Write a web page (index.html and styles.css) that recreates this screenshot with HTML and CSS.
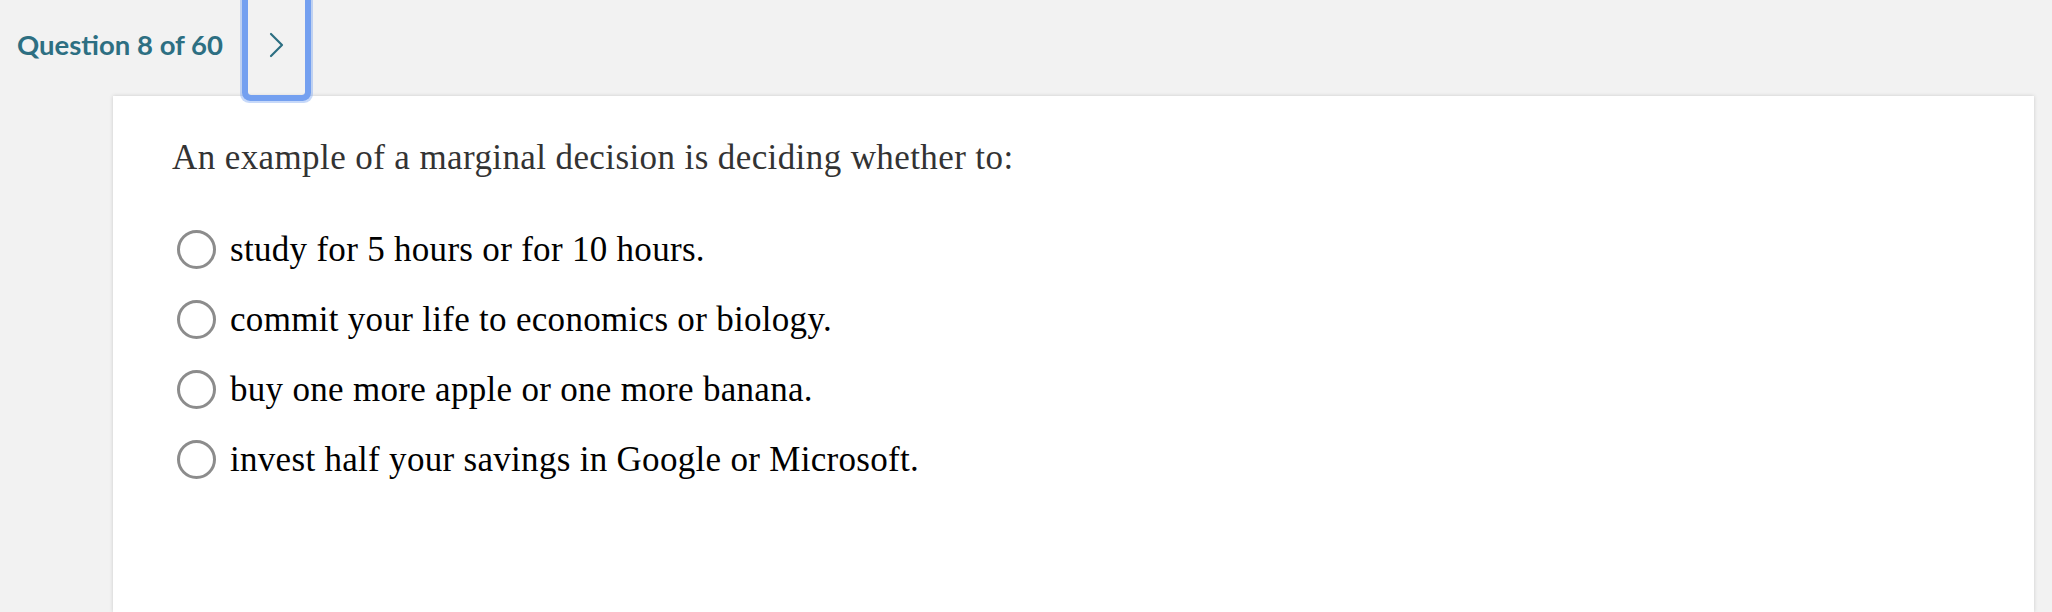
FILE: index.html
```html
<!DOCTYPE html>
<html lang="en">
<head>
<meta charset="utf-8">
<title>Question 8 of 60</title>
<link rel="stylesheet" href="styles.css">
</head>
<body>
<div class="page">
  <header class="qbar">
    <span class="qcount">Question 8 of 60</span>
    <button class="next" type="button" aria-label="Next question">
      <svg width="16" height="26" viewBox="0 0 16 26" aria-hidden="true"><path d="M2 2 L13 13 L2 24" fill="none" stroke="#2d6f82" stroke-width="2.2" stroke-linecap="round" stroke-linejoin="round"/></svg>
    </button>
  </header>
  <main class="card">
    <p class="prompt">An example of a marginal decision is deciding whether to:</p>
    <ul class="options">
      <li class="option"><span class="radio"></span><span class="label">study for 5 hours or for 10 hours.</span></li>
      <li class="option"><span class="radio"></span><span class="label">commit your life to economics or biology.</span></li>
      <li class="option"><span class="radio"></span><span class="label">buy one more apple or one more banana.</span></li>
      <li class="option"><span class="radio"></span><span class="label">invest half your savings in Google or Microsoft.</span></li>
    </ul>
  </main>
</div>
</body>
</html>
```
FILE: styles.css
```css
* { box-sizing: border-box; }
html, body { margin: 0; padding: 0; }
body {
  background: #f2f2f2;
  height: 612px;
  overflow: hidden;
}
.page {
  display: flex;
  flex-direction: column;
  height: 100%;
}
.qbar {
  display: flex;
  align-items: flex-start;
  height: 96px;
  padding-left: 17px;
}
.qcount {
  font-family: Lato, "Open Sans", sans-serif;
  font-weight: 700;
  font-size: 27.5px;
  color: #2d6f82;
  margin-top: 28px;
  width: 231px;
}
.next {
  position: relative;
  z-index: 2;
  width: 57px;
  height: 95px;
  border: none;
  background: transparent;
  border-radius: 0 0 3px 3px;
  box-shadow: 0 0 0 6px #74a0f0, 0 0 0 8px rgba(116, 160, 240, 0.4);
  display: flex;
  justify-content: center;
  align-items: flex-start;
  padding: 32px 0 0 0;
}
.card {
  flex: 1;
  margin: 0 18px 0 113px;
  background: #ffffff;
  box-shadow: 0 0 4px rgba(0, 0, 0, 0.16);
  padding: 44px 58px 0 59px;
}
.prompt {
  margin: 0;
  font-family: "Liberation Serif", "Times New Roman", serif;
  font-size: 35px;
  letter-spacing: 0.4px;
  line-height: 36px;
  color: #333333;
}
.options {
  list-style: none;
  margin: 54px 0 0 0;
  padding: 0 0 0 5px;
  display: flex;
  flex-direction: column;
  gap: 31px;
}
.option {
  display: flex;
  align-items: center;
  gap: 14px;
  height: 39px;
}
.radio {
  width: 39px;
  height: 39px;
  flex: none;
  border: 3px solid #8c8c8c;
  border-radius: 50%;
  background: #fff;
}
.label {
  font-family: "Liberation Serif", "Times New Roman", serif;
  font-size: 35px;
  letter-spacing: 0.3px;
  color: #000000;
}
```
